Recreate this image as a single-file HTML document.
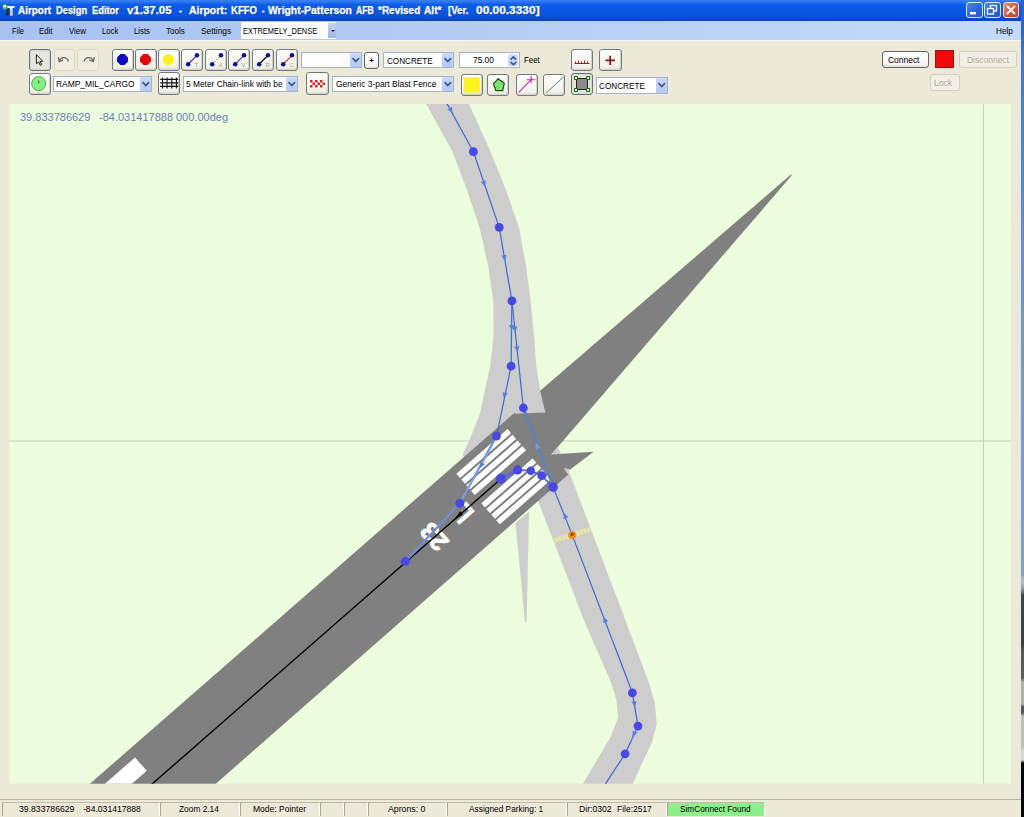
<!DOCTYPE html>
<html>
<head>
<meta charset="utf-8">
<title>Airport Design Editor</title>
<style>
html,body{margin:0;padding:0;}
body{width:1024px;height:817px;overflow:hidden;position:relative;background:#ECE9D8;font-family:"Liberation Sans","DejaVu Sans",sans-serif;font-size:8.8px;color:#000;}
.abs{position:absolute;}
.tx{position:absolute;white-space:pre;line-height:12px;transform-origin:0 0;}
#desk{left:1021px;top:0;width:3px;height:817px;background:linear-gradient(#2E5EBE 0px,#3464C0 30px,#4A76BE 60px,#6488C2 200px,#7896C0 320px,#7D9AC0 450px,#8AA0BC 575px,#A8B8C8 579px,#A8B8C8 584px,#8090A0 590px,#3A4A42 595px,#36443C 645px,#555C56 650px,#5A605A 678px,#B0B0A8 682px,#B0B0A8 704px,#50585E 707px,#50585E 713px,#C0BEB6 716px,#C4C2BA 748px,#D8D8D0 751px,#D8D8D0 760px,#05070C 763px,#05070C 817px);}
#wb{left:1019px;top:41px;width:2px;height:776px;background:linear-gradient(90deg,#ECE9D8,#DCE8F0);}
#title{left:0;top:0;width:1021px;height:20.5px;background:linear-gradient(#3B82F2 0px,#2A74F0 2px,#0F5DEA 4.5px,#0A58E6 9px,#0A55E0 14px,#0A4ED6 17.5px,#0944BE 20.5px);}
.capb{position:absolute;top:2px;width:16.5px;height:16px;box-sizing:border-box;border:1px solid #DCE6F8;border-radius:3px;background:linear-gradient(135deg,#4A84EA,#2A62D6 60%,#2258C8);}
.capb svg{position:absolute;left:-1px;top:-1px;}
.capb.cl{background:linear-gradient(135deg,#E89070,#D0553A 60%,#B8402A);border-color:#F0D8D0;}
#menu{left:0;top:20.5px;width:1021px;height:20px;background:linear-gradient(90deg,#A8C1F0,#C4DAFA);border-bottom:1px solid #F6F5EE;box-sizing:border-box;}
.btn{position:absolute;box-sizing:border-box;border:1px solid #6E7B84;border-radius:3px;background:linear-gradient(#FEFEFC,#F3F2EA 80%,#E4E2D6);box-shadow:inset -1px -1px 0 #D6D2C2;}
.btn.dis{border-color:#D9D6C6;background:#EFEDE0;box-shadow:none;}
.btn.on{background:#E6E5DC;border:1.5px solid #66727E;box-shadow:inset 0 0 0 1px #D2D4D0;}
.btn svg{position:absolute;left:-1px;top:-1px;}
.cb{position:absolute;box-sizing:border-box;border:1px solid #A5B4C8;background:#fff;overflow:hidden;}
.cb i{position:absolute;right:0;top:0;bottom:0;width:11.5px;background:linear-gradient(#C9D9FA,#B4C8F4);border-radius:1px;}
.cb i svg{position:absolute;left:0;top:0;}
.cb b.sp{position:absolute;right:1px;top:1px;bottom:1px;width:10.5px;background:linear-gradient(#D6E2FB,#BCCDF5);border-radius:2px;}
.tbtn{position:absolute;box-sizing:border-box;border:1.4px solid #5C6874;border-radius:3px;background:linear-gradient(#fff,#F4F3EE 85%,#DDD9CB);}
.tbtn.dis{border-color:#D2CFC0;background:#F1EFE4;}
#status{left:0;top:799px;width:1021px;height:18px;border-top:1px solid #B4B09E;box-sizing:border-box;background:#ECE9D8;}
#status .p{position:absolute;top:2px;height:14px;box-sizing:border-box;border-left:1px solid #A8A594;border-top:1px solid #BDBAA8;border-right:1px solid #fff;}
#map{left:9px;top:104px;width:1003px;height:680px;overflow:hidden;}
</style>
</head>
<body>
<div id="desk" class="abs"></div>
<div id="wb" class="abs"></div>
<div id="title" class="abs">
<svg class="abs" style="left:2px;top:3px" width="13" height="14"><rect x="0.5" y="1" width="5" height="6" rx="2" fill="#4FA060"/><rect x="1.5" y="2" width="2.5" height="2.5" fill="#E8F4E8"/><path d="M5 3 H12.5 V5 H10.5 V12.5 H8 V5 H5.5 Z" fill="#F4F4F0"/><path d="M4.5 6 L7 6 L6.5 12.5 L3.5 12.5 Z" fill="#2A2A2A"/><path d="M8 6 H10.5 V12.5 H8 Z" fill="#C8C8C0"/></svg>
<div class="capb" style="left:966px"><svg width="16" height="16"><rect x="4" y="10" width="6" height="2.4" fill="#fff"/></svg></div>
<div class="capb" style="left:984px"><svg width="16" height="16"><rect x="6.5" y="3.5" width="6" height="5.5" fill="none" stroke="#fff" stroke-width="1.3"/><rect x="3.5" y="6.5" width="6" height="5.5" fill="#2E68D8" stroke="#fff" stroke-width="1.3"/></svg></div>
<div class="capb cl" style="left:1002.5px"><svg width="16" height="16"><path d="M4 4 L12 12 M12 4 L4 12" stroke="#fff" stroke-width="1.8"/></svg></div>
</div>
<div id="menu" class="abs"></div>
<div id="map" class="abs">
<svg width="1003" height="680" viewBox="9 104 1003 680">
<defs><clipPath id="mc"><rect x="9.4" y="104" width="1001.8" height="679.7"/></clipPath></defs>
<rect x="9.4" y="104" width="1001.8" height="679.7" fill="#EBFDDC"/>
<g clip-path="url(#mc)">
<line x1="9" y1="441" x2="1012" y2="441" stroke="#C2D2B9" stroke-width="1.1"/>
<line x1="983.5" y1="104" x2="983.5" y2="784" stroke="#C2D2B9" stroke-width="1.1"/>
<g fill="#CDCDCE">
<polygon points="545,440 556,444 570.5,475.5 632.9,640 649.5,684.5 655,704 656.7,724 652,742 632.8,783.7 622,800 572,800 582.9,783.7 610,738 618.2,717.8 616.5,700 611,682.4 583.9,620 538.7,502.4 530,480"/>
<polygon points="515.5,523 529,511.4 526.6,622.3 525,622.3"/>
</g>
<g fill="#808080">
<polygon points="790.9,174.6 791.6,175.6 551.3,454.5 548,458 533.9,450.2 512,415"/>
<polygon points="551.3,454.5 593.7,451.8 568.8,470.5 560,470 550,458"/>
</g>
<g fill="#CDCDCE">
<polygon points="557.5,447 551.3,454.5 561,453.6"/>
<polygon points="563.5,468 569.6,469 568.4,473.6"/>
<polygon points="424,100 426.2,104 452.5,151.7 467,190 479.6,227.4 488,265 493.3,301 493.6,335 490.3,366 485,390 479.8,414 473.5,430 470,439 462.5,455 480,470 520,440 514.5,413.8 545.3,412.4 540,390 536.2,366 534,335 530.6,301 526,265 519,227.4 506,190 490.6,151.7 469,104 467,100"/>
</g>
<polygon fill="#808080" points="71.3,800 514.5,412.8 568.3,474.5 197.3,800"/>
<g fill="#FFFFFF">
<polygon points="135,757.5 146.8,770.8 116.7,797.1 104.9,783.8"/>
<g transform="translate(507.6,429.1) rotate(138.86)">
<rect x="0" y="-5.5" width="68" height="5.5"/><rect x="0" y="-13" width="68" height="5.5"/><rect x="0" y="-20.5" width="68" height="5.5"/><rect x="0" y="-28" width="68" height="5.5"/>
</g>
<g transform="translate(532.6,458.5) rotate(138.86)">
<rect x="0" y="-5.5" width="68" height="5.5"/><rect x="0" y="-13" width="68" height="5.5"/><rect x="0" y="-20.5" width="68" height="5.5"/><rect x="0" y="-28" width="68" height="5.5"/>
</g>
<text transform="translate(434,537) rotate(228.86)" text-anchor="middle" font-family="Liberation Sans, sans-serif" font-weight="bold" font-size="25" x="0" y="9" stroke="#fff" stroke-width="0.9">23</text>
<text transform="translate(474.2,511.2) rotate(228.86) scale(1,1.2)" font-family="Liberation Sans, sans-serif" font-weight="bold" font-size="24" x="-1.7" y="0" stroke="#fff" stroke-width="0.6">L</text>
</g>
<line x1="501" y1="478.8" x2="133" y2="800.7" stroke="#000" stroke-width="1.4"/>
<polygon fill="#000" points="455,518.8 463,514.5 460.2,511.3"/>
<g fill="none" stroke="#3D69D2" stroke-width="1.2" stroke-linejoin="round">
<polyline points="445,100 473.4,151.7 499.2,227.4 511.9,300.9 511.1,366.2 496.5,436.1"/>
<polyline points="511.9,300.9 523.4,408"/>
<polyline points="553.1,487.1 572.2,534.9 632.4,692.8 638,726.1 625.1,753.8 605.8,783.4 595,800"/>
</g>
<g fill="none" stroke-linejoin="round" stroke-linecap="round">
<polyline points="523.4,408 553.1,487.1" stroke="#6480B6" stroke-width="2.8"/>
<polyline points="496.5,436.1 459.8,503.3 405.3,561.4" stroke="#6E8EDC" stroke-width="2.2"/>
<polyline points="491.5,447 462.5,498" stroke="#86A4E6" stroke-width="1.2"/>
<polyline points="501,478.8 517.6,469.9" stroke="#5A66D2" stroke-width="3"/><polyline points="517.6,469.9 530.8,470.7 541.8,475.7 553.1,487.1" stroke="#4A5CE0" stroke-width="1.6"/>
</g>
<line x1="554.6" y1="540.3" x2="590" y2="529.3" stroke="#E8E4A4" stroke-width="5" stroke-dasharray="3.2 0.6"/>
<g fill="#5580E0">
<polygon points="0,3.5 -2.6,-2.5 2.6,-2.5" transform="translate(450.9,110.3) rotate(-29)"/>
<polygon points="0,3.5 -2.6,-2.5 2.6,-2.5" transform="translate(484,183.5) rotate(-19)"/>
<polygon points="0,3.5 -2.6,-2.5 2.6,-2.5" transform="translate(504.4,257.7) rotate(-10)"/>
<polygon points="0,3.5 -2.6,-2.5 2.6,-2.5" transform="translate(511.6,327.6) rotate(0)"/>
<polygon points="0,3.5 -2.6,-2.5 2.6,-2.5" transform="translate(515,329) rotate(-6)"/>
<polygon points="0,3.5 -2.6,-2.5 2.6,-2.5" transform="translate(517.1,349) rotate(-6)"/>
<polygon points="0,3.5 -2.6,-2.5 2.6,-2.5" transform="translate(504.6,395.2) rotate(12)"/>
<polygon points="0,3.5 -2.6,-2.5 2.6,-2.5" transform="translate(481.5,465.3) rotate(29)"/>
<polygon points="0,3.5 -2.6,-2.5 2.6,-2.5" transform="translate(565,515.8) rotate(158)"/>
<polygon points="0,3.5 -2.6,-2.5 2.6,-2.5" transform="translate(604.8,619.8) rotate(159)"/>
<polygon points="0,3.5 -2.6,-2.5 2.6,-2.5" transform="translate(634.5,703.8) rotate(-10)"/>
<polygon points="0,3.5 -2.6,-2.5 2.6,-2.5" transform="translate(633.9,734) rotate(25)"/>
<polygon points="0,3.5 -2.6,-2.5 2.6,-2.5" transform="translate(537,446) rotate(159)" fill="#7C9AD4"/>
</g>
<g fill="#4848E4">
<circle cx="473.4" cy="151.7" r="4.4"/>
<circle cx="499.2" cy="227.4" r="4.4"/>
<circle cx="511.9" cy="300.9" r="4.4"/>
<circle cx="511.1" cy="366.2" r="4.4"/>
<circle cx="523.4" cy="408" r="4.4"/>
<circle cx="496.5" cy="436.1" r="4.4"/>
<circle cx="459.8" cy="503.3" r="4.4"/>
<circle cx="405.3" cy="561.4" r="4.4"/>
<circle cx="501" cy="478.8" r="5"/>
<circle cx="517.6" cy="469.9" r="4.6"/>
<circle cx="530.8" cy="470.7" r="4.2"/>
<circle cx="541.8" cy="475.7" r="4.4"/>
<circle cx="553.1" cy="487.1" r="4.8"/>
<circle cx="632.4" cy="692.8" r="4.4"/>
<circle cx="638" cy="726.1" r="4.4"/>
<circle cx="625.1" cy="753.8" r="4.4"/>
</g>
<circle cx="572.2" cy="534.9" r="4" fill="#F2921E"/>
<circle cx="572.2" cy="534.2" r="1.6" fill="#8A3A12"/>
<text x="20" y="121.4" font-family="Liberation Sans, sans-serif" font-size="11" fill="#6E7EB8" xml:space="preserve">39.833786629</text>
<text x="99" y="121.4" font-family="Liberation Sans, sans-serif" font-size="11" fill="#6E7EB8">-84.031417888</text>
<text x="176" y="121.4" font-family="Liberation Sans, sans-serif" font-size="11" fill="#6E7EB8">000.00deg</text>

</g>
</svg>
</div>
<div class="cb" style="left:241px;top:22px;width:95px;height:17px;border:0;"><b style="position:absolute;right:0;top:1px;width:8px;height:15px;background:linear-gradient(#C4D4F2,#9CB4E2);"></b><b style="position:absolute;right:1.5px;top:7.5px;border:2.5px solid transparent;border-top:2.5px solid #000;border-bottom:0;"></b></div>
<!-- row 1 -->
<div class="btn on" style="left:29px;top:49px;width:22px;height:22px"><svg width="22" height="22"><path d="M7.4 5.6 L7.4 14.8 L9.6 12.9 L11.3 16.4 L12.7 15.7 L11.1 12.4 L13.7 12.3 Z" fill="#EDEBE2" stroke="#222" stroke-width="1" stroke-linejoin="round"/></svg></div>
<div class="btn dis" style="left:54px;top:49px;width:21px;height:22px"><svg width="21" height="22"><path d="M5.5 11.5 C7 7.5 13 7.5 14.5 12.5" fill="none" stroke="#6E6E68" stroke-width="1.4"/><path d="M4.3 8.2 L5.2 12.6 L9 11" fill="none" stroke="#6E6E68" stroke-width="1.4"/></svg></div>
<div class="btn dis" style="left:77px;top:49px;width:22px;height:22px"><svg width="22" height="22"><path d="M16 11.5 C14.5 7.5 8.5 7.5 7 12.5" fill="none" stroke="#6E6E68" stroke-width="1.4"/><path d="M17.2 8.2 L16.3 12.6 L12.5 11" fill="none" stroke="#6E6E68" stroke-width="1.4"/></svg></div>
<div class="btn" style="left:112px;top:49px;width:22px;height:22px"><svg width="22" height="22"><polygon points="8.4,5 12.6,5 16,8.4 16,12.6 12.6,16 8.4,16 5,12.6 5,8.4" fill="#0A0AC8"/></svg></div>
<div class="btn" style="left:135px;top:49px;width:22px;height:22px"><svg width="22" height="22"><polygon points="8.4,5 12.6,5 16,8.4 16,12.6 12.6,16 8.4,16 5,12.6 5,8.4" fill="#E80A0A"/></svg></div>
<div class="btn" style="left:158px;top:49px;width:22px;height:22px"><svg width="22" height="22"><circle cx="10.5" cy="10.5" r="5.5" fill="#FAF21E"/></svg></div>
<div class="btn" style="left:181px;top:49px;width:22px;height:22px"><svg width="22" height="22"><line x1="7.2" y1="15.2" x2="16" y2="6.3" stroke="#1E2EA0" stroke-width="1.2"/><circle cx="7.2" cy="15.2" r="2.3" fill="#14148C"/><circle cx="16" cy="6.3" r="2.3" fill="#14148C"/><text x="13.6" y="18.2" font-size="6" fill="#9A9A90" font-family="Liberation Sans, sans-serif">T</text></svg></div>
<div class="btn" style="left:205px;top:49px;width:22px;height:22px"><svg width="22" height="22"><line x1="7.2" y1="15.2" x2="16" y2="6.3" stroke="#3AA050" stroke-width="1" stroke-dasharray="1.5 1.5"/><circle cx="7.2" cy="15.2" r="2.3" fill="#14148C"/><circle cx="16" cy="6.3" r="2.3" fill="#14148C"/><text x="13.6" y="18.2" font-size="6" fill="#B8A860" font-family="Liberation Sans, sans-serif">A</text></svg></div>
<div class="btn" style="left:228px;top:49px;width:22px;height:22px"><svg width="22" height="22"><line x1="7.2" y1="15.2" x2="16" y2="6.3" stroke="#5A32C8" stroke-width="1.2"/><circle cx="7.2" cy="15.2" r="2.3" fill="#14148C"/><circle cx="16" cy="6.3" r="2.3" fill="#14148C"/><text x="13.6" y="18.2" font-size="6" fill="#9A9A90" font-family="Liberation Sans, sans-serif">V</text></svg></div>
<div class="btn" style="left:252px;top:49px;width:22px;height:22px"><svg width="22" height="22"><line x1="7.2" y1="15.2" x2="16" y2="6.3" stroke="#111" stroke-width="1.3"/><circle cx="7.2" cy="15.2" r="2.3" fill="#14148C"/><circle cx="16" cy="6.3" r="2.3" fill="#14148C"/><text x="13.6" y="18.2" font-size="6" fill="#9A9A90" font-family="Liberation Sans, sans-serif">R</text></svg></div>
<div class="btn" style="left:276px;top:49px;width:22px;height:22px"><svg width="22" height="22"><line x1="7.2" y1="15.2" x2="16" y2="6.3" stroke="#D04020" stroke-width="1.2"/><circle cx="7.2" cy="15.2" r="2.3" fill="#14148C"/><circle cx="16" cy="6.3" r="2.3" fill="#14148C"/><text x="13.6" y="18.2" font-size="6" fill="#B8A860" font-family="Liberation Sans, sans-serif">C</text></svg></div>
<div class="cb" style="left:301px;top:52px;width:61px;height:16px"><i><svg width="12" height="14"><path d="M2.6 5.2 L5.8 8.6 L9 5.2" fill="none" stroke="#3F5488" stroke-width="1.7"/></svg></i></div>
<div class="tbtn" style="left:364px;top:52px;width:15px;height:16.5px;font-size:8px;font-weight:bold;line-height:16.5px;text-align:center;">+</div>
<div class="cb" style="left:383px;top:52px;width:71px;height:16px"><i><svg width="12" height="14"><path d="M2.6 5.2 L5.8 8.6 L9 5.2" fill="none" stroke="#3F5488" stroke-width="1.7"/></svg></i></div>
<div class="cb" style="left:459px;top:52px;width:61px;height:16px"><b class="sp"><svg width="11" height="14" style="position:absolute;left:0;top:0"><path d="M2.6 5.6 L5.4 2.9 L8.2 5.6 M2.6 8 L5.4 10.7 L8.2 8" fill="none" stroke="#3F5488" stroke-width="1.6"/></svg></b></div>
<div class="btn" style="left:571px;top:49px;width:22px;height:22px"><svg width="22" height="22"><path d="M3.5 14.5 H18.5 M4.5 14.5 V12.5 M7.5 14.5 V11.5 M10.5 14.5 V12.5 M13.5 14.5 V11.5 M16.5 14.5 V12.5" stroke="#B01818" stroke-width="1" fill="none"/></svg></div>
<div class="btn" style="left:599px;top:49px;width:23px;height:22px"><svg width="23" height="22"><path d="M6.5 11.4 H15.9 M11.2 6.7 V16.1" stroke="#8E1010" stroke-width="1.7" fill="none"/></svg></div>
<div class="tbtn" style="left:882px;top:51px;width:47px;height:17px"></div>
<div class="abs" style="left:935px;top:50px;width:19px;height:18px;background:#F20A0A;border:1px solid #A01010;box-sizing:border-box"></div>
<div class="tbtn dis" style="left:959px;top:51px;width:58px;height:17px"></div>
<div class="tbtn dis" style="left:930px;top:74px;width:30px;height:17px"></div>
<!-- row 2 -->
<div class="btn" style="left:29px;top:73px;width:22px;height:22px"><svg width="22" height="22"><circle cx="9.7" cy="10.6" r="7" fill="#86EE86" stroke="#44A044" stroke-width="0.9"/><path d="M9.7 10.6 V7.6" stroke="#1E6E1E" stroke-width="1"/></svg></div>
<div class="cb" style="left:53px;top:76px;width:99px;height:16px"><i><svg width="12" height="14"><path d="M2.6 5.2 L5.8 8.6 L9 5.2" fill="none" stroke="#3F5488" stroke-width="1.7"/></svg></i></div>
<div class="btn" style="left:158px;top:72px;width:22px;height:23px"><svg width="22" height="23"><path d="M2.2 7.4 H20.2 M2.2 10.9 H20.2 M2.2 14.4 H20.2 M4.5 5.4 V16.6 M9.1 5.4 V16.6 M13.8 5.4 V16.6 M18.4 5.4 V16.6" stroke="#111" stroke-width="1.1" fill="none"/></svg></div>
<div class="cb" style="left:183px;top:76px;width:115px;height:16px"><i><svg width="12" height="14"><path d="M2.6 5.2 L5.8 8.6 L9 5.2" fill="none" stroke="#3F5488" stroke-width="1.7"/></svg></i></div>
<div class="btn" style="left:306px;top:72px;width:23px;height:23px"><svg width="23" height="23"><rect x="4" y="8" width="15" height="7.5" fill="#fff"/><path d="M4 8h2.5v2.5H4z M9 8h2.5v2.5H9z M14 8h2.5v2.5H14z M6.5 10.5h2.5v2.5H6.5z M11.5 10.5h2.5v2.5H11.5z M16.5 10.5h2.5v2.5H16.5z M4 13h2.5v2.5H4z M9 13h2.5v2.5H9z M14 13h2.5v2.5H14z" fill="#E02020"/></svg></div>
<div class="cb" style="left:332px;top:76px;width:122px;height:16px"><i><svg width="12" height="14"><path d="M2.6 5.2 L5.8 8.6 L9 5.2" fill="none" stroke="#3F5488" stroke-width="1.7"/></svg></i></div>
<div class="btn" style="left:461px;top:73.5px;width:22px;height:22px"><svg width="22" height="22"><rect x="2.8" y="3.4" width="16" height="15" fill="#FBF41C"/></svg></div>
<div class="btn" style="left:487px;top:73.5px;width:22px;height:22px"><svg width="22" height="22"><polygon points="11.1,4.7 17.3,9.2 15.7,16.6 8.8,16.6 6.5,9.8" fill="#7EE46E" stroke="#1E4A1E" stroke-width="1.2" stroke-linejoin="round"/></svg></div>
<div class="btn" style="left:516px;top:73.5px;width:22px;height:22px"><svg width="22" height="22"><path d="M2.8 18.4 L16.1 4.6 M10.8 5.7 H19.4 M15.1 1.8 V9.2" stroke="#CC2EB0" stroke-width="1.1" fill="none"/></svg></div>
<div class="btn" style="left:543px;top:73.5px;width:22px;height:22px"><svg width="22" height="22"><path d="M3.2 19 L20 3.4" stroke="#3A8A80" stroke-width="1" fill="none"/></svg></div>
<div class="btn on" style="left:571px;top:73px;width:22px;height:22px"><svg width="22" height="22"><rect x="5.5" y="5.5" width="11" height="11" fill="#8A8A8A" stroke="#222" stroke-width="1"/><g fill="#C8F0C8" stroke="#1E6E1E" stroke-width="1"><rect x="3.5" y="3.5" width="3" height="3"/><rect x="15.5" y="3.5" width="3" height="3"/><rect x="3.5" y="15.5" width="3" height="3"/><rect x="15.5" y="15.5" width="3" height="3"/></g></svg></div>
<div class="cb" style="left:596px;top:77px;width:72px;height:16.5px"><i><svg width="12" height="14"><path d="M2.6 5.2 L5.8 8.6 L9 5.2" fill="none" stroke="#3F5488" stroke-width="1.7"/></svg></i></div>

<div id="status" class="abs">
<div class="p" style="left:2px;width:158px"></div>
<div class="p" style="left:160px;width:80px"></div>
<div class="p" style="left:240px;width:80px"></div>
<div class="p" style="left:320px;width:24px"></div>
<div class="p" style="left:344px;width:24px"></div>
<div class="p" style="left:368px;width:79px"></div>
<div class="p" style="left:447px;width:120px"></div>
<div class="p" style="left:567px;width:100px"></div>
<div class="p" style="left:667px;width:98px;background:#8CEE8C"></div>

</div>
<span class="tx" style="left:17.60px;top:5.03px;font-size:10.3px;color:#fff;transform:scaleX(0.963);font-weight:bold;text-shadow:0.6px 0.8px 0 #0A3A9A;-webkit-text-stroke:0.25px #fff;">Airport</span>
<span class="tx" style="left:55.70px;top:5.03px;font-size:10.3px;color:#fff;transform:scaleX(0.905);font-weight:bold;text-shadow:0.6px 0.8px 0 #0A3A9A;-webkit-text-stroke:0.25px #fff;">Design</span>
<span class="tx" style="left:91.80px;top:5.03px;font-size:10.3px;color:#fff;transform:scaleX(0.906);font-weight:bold;text-shadow:0.6px 0.8px 0 #0A3A9A;-webkit-text-stroke:0.25px #fff;">Editor</span>
<span class="tx" style="left:127.00px;top:5.03px;font-size:10.3px;color:#fff;transform:scaleX(1.113);font-weight:bold;text-shadow:0.6px 0.8px 0 #0A3A9A;-webkit-text-stroke:0.25px #fff;">v1.37.05</span>
<span class="tx" style="left:179.30px;top:5.03px;font-size:10.3px;color:#fff;transform:scaleX(0.825);font-weight:bold;text-shadow:0.6px 0.8px 0 #0A3A9A;-webkit-text-stroke:0.25px #fff;">-</span>
<span class="tx" style="left:188.80px;top:5.03px;font-size:10.3px;color:#fff;transform:scaleX(1.010);font-weight:bold;text-shadow:0.6px 0.8px 0 #0A3A9A;-webkit-text-stroke:0.25px #fff;">Airport:</span>
<span class="tx" style="left:230.80px;top:5.03px;font-size:10.3px;color:#fff;transform:scaleX(0.928);font-weight:bold;text-shadow:0.6px 0.8px 0 #0A3A9A;-webkit-text-stroke:0.25px #fff;">KFFO</span>
<span class="tx" style="left:261.60px;top:5.03px;font-size:10.3px;color:#fff;transform:scaleX(0.725);font-weight:bold;text-shadow:0.6px 0.8px 0 #0A3A9A;-webkit-text-stroke:0.25px #fff;">-</span>
<span class="tx" style="left:267.90px;top:5.03px;font-size:10.3px;color:#fff;transform:scaleX(1.007);font-weight:bold;text-shadow:0.6px 0.8px 0 #0A3A9A;-webkit-text-stroke:0.25px #fff;">Wright-Patterson</span>
<span class="tx" style="left:355.80px;top:5.03px;font-size:10.3px;color:#fff;transform:scaleX(0.840);font-weight:bold;text-shadow:0.6px 0.8px 0 #0A3A9A;-webkit-text-stroke:0.25px #fff;">AFB</span>
<span class="tx" style="left:377.60px;top:5.03px;font-size:10.3px;color:#fff;transform:scaleX(0.972);font-weight:bold;text-shadow:0.6px 0.8px 0 #0A3A9A;-webkit-text-stroke:0.25px #fff;">*Revised</span>
<span class="tx" style="left:423.50px;top:5.03px;font-size:10.3px;color:#fff;transform:scaleX(0.987);font-weight:bold;text-shadow:0.6px 0.8px 0 #0A3A9A;-webkit-text-stroke:0.25px #fff;">Alt*</span>
<span class="tx" style="left:447.90px;top:5.03px;font-size:10.3px;color:#fff;transform:scaleX(0.936);font-weight:bold;text-shadow:0.6px 0.8px 0 #0A3A9A;-webkit-text-stroke:0.25px #fff;">[Ver.</span>
<span class="tx" style="left:475.60px;top:5.03px;font-size:10.3px;color:#fff;transform:scaleX(1.157);font-weight:bold;text-shadow:0.6px 0.8px 0 #0A3A9A;-webkit-text-stroke:0.25px #fff;">00.00.3330]</span>
<span class="tx" style="left:11.75px;top:25.15px;font-size:8.8px;color:#000;transform:scaleX(0.840);">File</span>
<span class="tx" style="left:39.25px;top:25.15px;font-size:8.8px;color:#000;transform:scaleX(0.891);">Edit</span>
<span class="tx" style="left:68.75px;top:25.15px;font-size:8.8px;color:#000;transform:scaleX(0.895);">View</span>
<span class="tx" style="left:101.50px;top:25.15px;font-size:8.8px;color:#000;transform:scaleX(0.873);">Lock</span>
<span class="tx" style="left:133.50px;top:25.15px;font-size:8.8px;color:#000;transform:scaleX(0.883);">Lists</span>
<span class="tx" style="left:165.75px;top:25.15px;font-size:8.8px;color:#000;transform:scaleX(0.911);">Tools</span>
<span class="tx" style="left:200.50px;top:25.15px;font-size:8.8px;color:#000;transform:scaleX(0.949);">Settings</span>
<span class="tx" style="left:995.50px;top:25.15px;font-size:8.8px;color:#000;transform:scaleX(0.934);">Help</span>
<span class="tx" style="left:242.50px;top:24.95px;font-size:8.8px;color:#000;transform:scaleX(0.844);">EXTREMELY_DENSE</span>
<span class="tx" style="left:55.50px;top:78.35px;font-size:8.8px;color:#000;transform:scaleX(0.957);">RAMP_MIL_CARGO</span>
<span class="tx" style="left:186.25px;top:78.35px;font-size:8.8px;color:#000;transform:scaleX(0.950);">5 Meter Chain-link with be</span>
<span class="tx" style="left:336.00px;top:78.35px;font-size:8.8px;color:#000;transform:scaleX(0.955);">Generic 3-part Blast Fence</span>
<span class="tx" style="left:386.50px;top:54.85px;font-size:8.8px;color:#000;transform:scaleX(0.924);">CONCRETE</span>
<span class="tx" style="left:473.00px;top:54.15px;font-size:8.8px;color:#000;transform:scaleX(0.949);">75.00</span>
<span class="tx" style="left:523.75px;top:54.35px;font-size:8.8px;color:#000;transform:scaleX(0.895);">Feet</span>
<span class="tx" style="left:599.00px;top:79.75px;font-size:8.8px;color:#000;transform:scaleX(0.929);">CONCRETE</span>
<span class="tx" style="left:888.00px;top:54.35px;font-size:8.8px;color:#000;transform:scaleX(0.960);">Connect</span>
<span class="tx" style="left:966.75px;top:54.35px;font-size:8.8px;color:#ACA899;transform:scaleX(0.964);">Disconnect</span>
<span class="tx" style="left:934.25px;top:77.35px;font-size:8.8px;color:#ACA899;transform:scaleX(0.977);">Lock</span>
<span class="tx" style="left:18.75px;top:803.35px;font-size:8.8px;color:#000;transform:scaleX(0.985);">39.833786629</span>
<span class="tx" style="left:82.50px;top:803.35px;font-size:8.8px;color:#000;transform:scaleX(0.978);">-84.031417888</span>
<span class="tx" style="left:179.25px;top:803.35px;font-size:8.8px;color:#000;transform:scaleX(0.949);">Zoom 2.14</span>
<span class="tx" style="left:252.50px;top:803.35px;font-size:8.8px;color:#000;transform:scaleX(0.967);">Mode: Pointer</span>
<span class="tx" style="left:388.00px;top:803.35px;font-size:8.8px;color:#000;transform:scaleX(0.993);">Aprons: 0</span>
<span class="tx" style="left:468.75px;top:803.35px;font-size:8.8px;color:#000;transform:scaleX(0.948);">Assigned Parking: 1</span>
<span class="tx" style="left:579.10px;top:803.35px;font-size:8.8px;color:#000;transform:scaleX(0.980);">Dir:0302</span>
<span class="tx" style="left:617.00px;top:803.35px;font-size:8.8px;color:#000;transform:scaleX(0.962);">File:2517</span>
<span class="tx" style="left:680.00px;top:803.35px;font-size:8.8px;color:#000;transform:scaleX(0.939);">SimConnect Found</span>
</body>
</html>
